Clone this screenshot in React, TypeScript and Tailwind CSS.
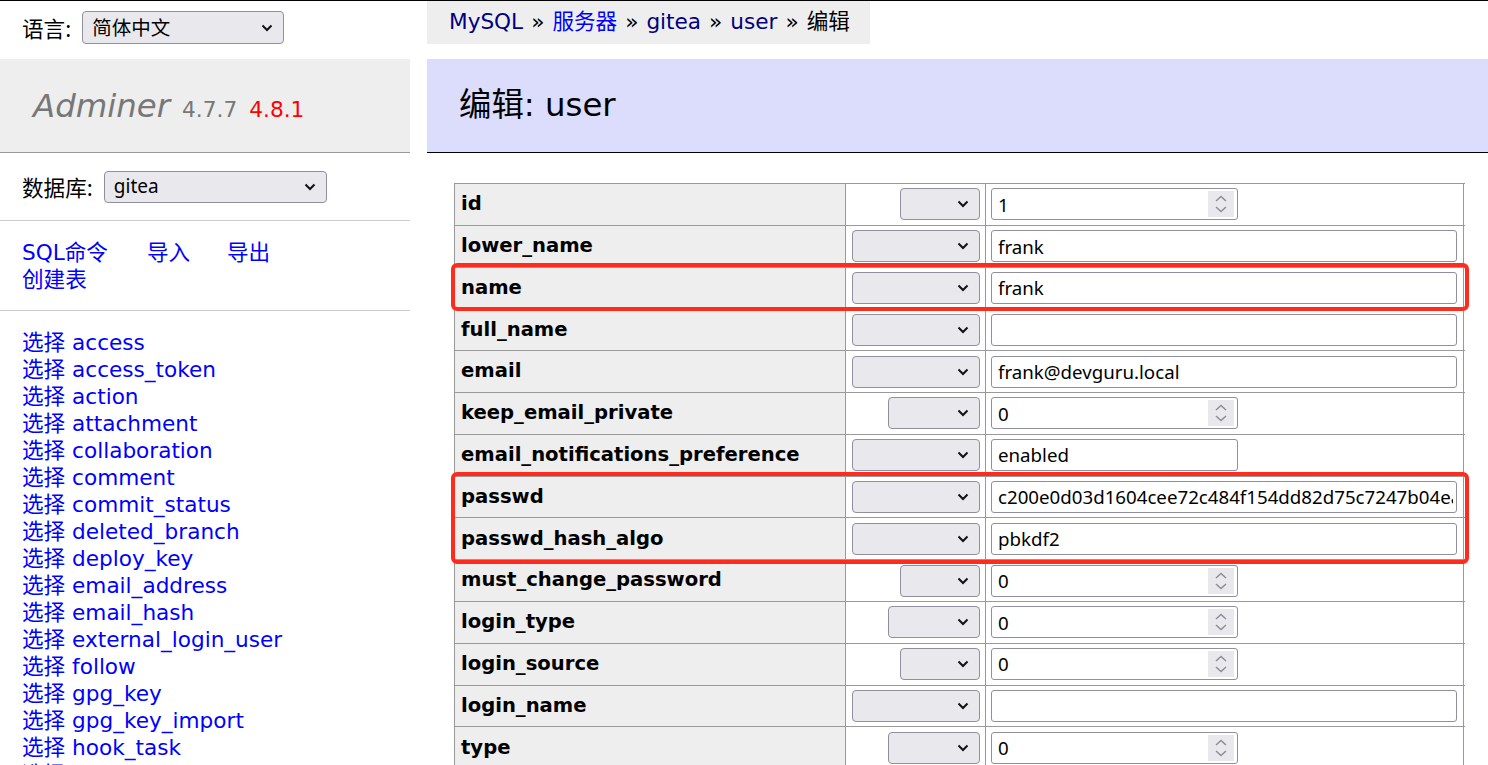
import React from "react"

type Row = {
  name: string
  fn: string
  kind: "number" | "text" | "short"
  value: string
}

const rows: Row[] = [
  { name: "id", fn: "w-[80px]", kind: "number", value: "1" },
  { name: "lower_name", fn: "w-[128px]", kind: "text", value: "frank" },
  { name: "name", fn: "w-[128px]", kind: "text", value: "frank" },
  { name: "full_name", fn: "w-[128px]", kind: "text", value: "" },
  { name: "email", fn: "w-[128px]", kind: "text", value: "frank@devguru.local" },
  { name: "keep_email_private", fn: "w-[92px]", kind: "number", value: "0" },
  { name: "email_notifications_preference", fn: "w-[128px]", kind: "short", value: "enabled" },
  {
    name: "passwd",
    fn: "w-[128px]",
    kind: "text",
    value: "c200e0d03d1604cee72c484f154dd82d75c7247b04ea971a96dd1def8682d02488d0323397e26a18fb806c7a20f0b564c900",
  },
  { name: "passwd_hash_algo", fn: "w-[128px]", kind: "text", value: "pbkdf2" },
  { name: "must_change_password", fn: "w-[80px]", kind: "number", value: "0" },
  { name: "login_type", fn: "w-[92px]", kind: "number", value: "0" },
  { name: "login_source", fn: "w-[80px]", kind: "number", value: "0" },
  { name: "login_name", fn: "w-[128px]", kind: "text", value: "" },
  { name: "type", fn: "w-[92px]", kind: "number", value: "0" },
]

const tables = [
  "access",
  "access_token",
  "action",
  "attachment",
  "collaboration",
  "comment",
  "commit_status",
  "deleted_branch",
  "deploy_key",
  "email_address",
  "email_hash",
  "external_login_user",
  "follow",
  "gpg_key",
  "gpg_key_import",
  "hook_task",
  "issue",
  "issue_assignees",
]

function Chevron() {
  return (
    <svg width="12" height="8" viewBox="0 0 12 8" className="shrink-0">
      <polyline points="1.5,1.5 6,6 10.5,1.5" fill="none" stroke="#111" strokeWidth="2" />
    </svg>
  )
}

function Spinner() {
  return (
    <div className="flex h-[26px] w-[26px] shrink-0 items-center justify-center bg-[#e9e9ed]">
      <svg width="16" height="22" viewBox="0 0 16 22">
        <polyline points="3,8 8,3.5 13,8" fill="none" stroke="#8d8d96" strokeWidth="1.5" />
        <polyline points="3,14 8,18.5 13,14" fill="none" stroke="#8d8d96" strokeWidth="1.5" />
      </svg>
    </div>
  )
}

function FakeSelect({ width, children, className = "" }: { width: string; children?: React.ReactNode; className?: string }) {
  return (
    <div
      className={`flex items-center justify-between rounded-[4px] border border-[#8f8f9d] bg-[#e9e9ed] pl-[9px] pr-[10px] ${width} ${className}`}
    >
      <span className="whitespace-nowrap">{children}</span>
      <Chevron />
    </div>
  )
}

function ValueInput({ row }: { row: Row }) {
  const width = row.kind === "text" ? "w-[466px]" : "w-[247px]"
  return (
    <div
      className={`flex h-[32px] items-center overflow-hidden rounded-[3px] border border-[#8f8f9d] bg-white pl-[6px] pr-[3px] font-['Noto_Sans',sans-serif] text-[18.7px] text-black ${width}`}
    >
      <span className="min-w-0 flex-1 overflow-hidden whitespace-nowrap">{row.value}</span>
      {row.kind === "number" ? <Spinner /> : null}
    </div>
  )
}

export default function App() {
  return (
    <div className="flex h-screen overflow-hidden border-t border-black bg-white font-['DejaVu_Sans','Noto_Sans_CJK_SC',sans-serif] text-[21.6px] leading-[1.25] text-black">
      <aside className="w-[410px] shrink-0">
        <div className="flex h-[58px] items-start pl-[22px] pt-[10px]">
          <span className="mt-[3px] font-['Noto_Sans_CJK_SC',sans-serif] text-[21.6px]">语言:</span>
          <FakeSelect width="w-[202px]" className="ml-[11px] h-[33px] font-['Noto_Sans_CJK_SC',sans-serif] text-[19.5px]">
            简体中文
          </FakeSelect>
        </div>

        <div className="h-[94px] border-b border-[#999] bg-[#eee] px-[33px] pt-[27px]">
          <div className="flex items-baseline whitespace-nowrap leading-[41px]">
            <span className="text-[32.4px] italic text-[#777]">Adminer</span>
            <span className="ml-[12px] text-[21.7px] text-[#777]">4.7.7</span>
            <span className="ml-[12px] text-[21.7px] text-[#ff0000]">4.8.1</span>
          </div>
        </div>

        <div className="flex h-[68px] items-center border-b border-[#ccc] px-[22px]">
          <span className="font-['Noto_Sans_CJK_SC',sans-serif] text-[21.6px]">数据库:</span>
          <FakeSelect width="w-[223px]" className="ml-[11px] h-[32px] font-['Noto_Sans',sans-serif] text-[19px]">
            gitea
          </FakeSelect>
        </div>

        <div className="border-b border-[#ccc] px-[22px] pb-[16px] pt-[19px] text-[#0000ff]">
          <div className="flex">
            <span className="w-[125px]">SQL命令</span>
            <span className="w-[80px]">导入</span>
            <span>导出</span>
          </div>
          <div>创建表</div>
        </div>

        <ul className="px-[22px] pb-[17px] pt-[18px] leading-[27px] text-[#0000ff]">
          {tables.map((t) => (
            <li key={t} className="whitespace-nowrap">
              选择 {t}
            </li>
          ))}
        </ul>
      </aside>

      <main className="min-w-0 flex-1 pl-[17px]">
        <div className="flex h-[43px] w-[443px] items-center whitespace-nowrap bg-[#eee] px-[22px]">
          <span className="text-[#000080]">MySQL</span>
          <span className="mx-[8px]">»</span>
          <span className="text-[#0000ff]">服务器</span>
          <span className="mx-[8px]">»</span>
          <span className="text-[#000080]">gitea</span>
          <span className="mx-[8px]">»</span>
          <span className="text-[#000080]">user</span>
          <span className="mx-[8px]">»</span>
          <span>编辑</span>
        </div>

        <h1 className="mt-[15px] h-[94px] border-b border-black bg-[#dcdcfc] px-[32px] pt-[26px] text-[32.4px] font-normal leading-[41px]">
          编辑: user
        </h1>

        <div className="relative ml-[27px] mt-[30px] w-[1011px] border-l border-t border-[#999]">
          {rows.map((row) => (
            <div key={row.name} className="flex h-[41.8px] border-b border-[#999]">
              <div className="flex w-[391px] items-center border-r border-[#999] bg-[#eee] px-[6px] text-[19.6px] font-bold">
                {row.name}
              </div>
              <div className="flex w-[140px] items-center justify-end border-r border-[#999] pr-[5px]">
                <FakeSelect width={row.fn} className="h-[32px]" />
              </div>
              <div className="flex w-[478px] items-center border-r border-[#999] px-[5px]">
                <ValueInput row={row} />
              </div>
            </div>
          ))}

          <div className="pointer-events-none absolute left-[-4px] top-[79px] h-[48px] w-[1018px] rounded-[6px] border-4 border-[#ff2b1c]" />
          <div className="pointer-events-none absolute left-[-4px] top-[288px] h-[92px] w-[1018px] rounded-[6px] border-4 border-[#ff2b1c]" />
        </div>
      </main>
    </div>
  )
}
